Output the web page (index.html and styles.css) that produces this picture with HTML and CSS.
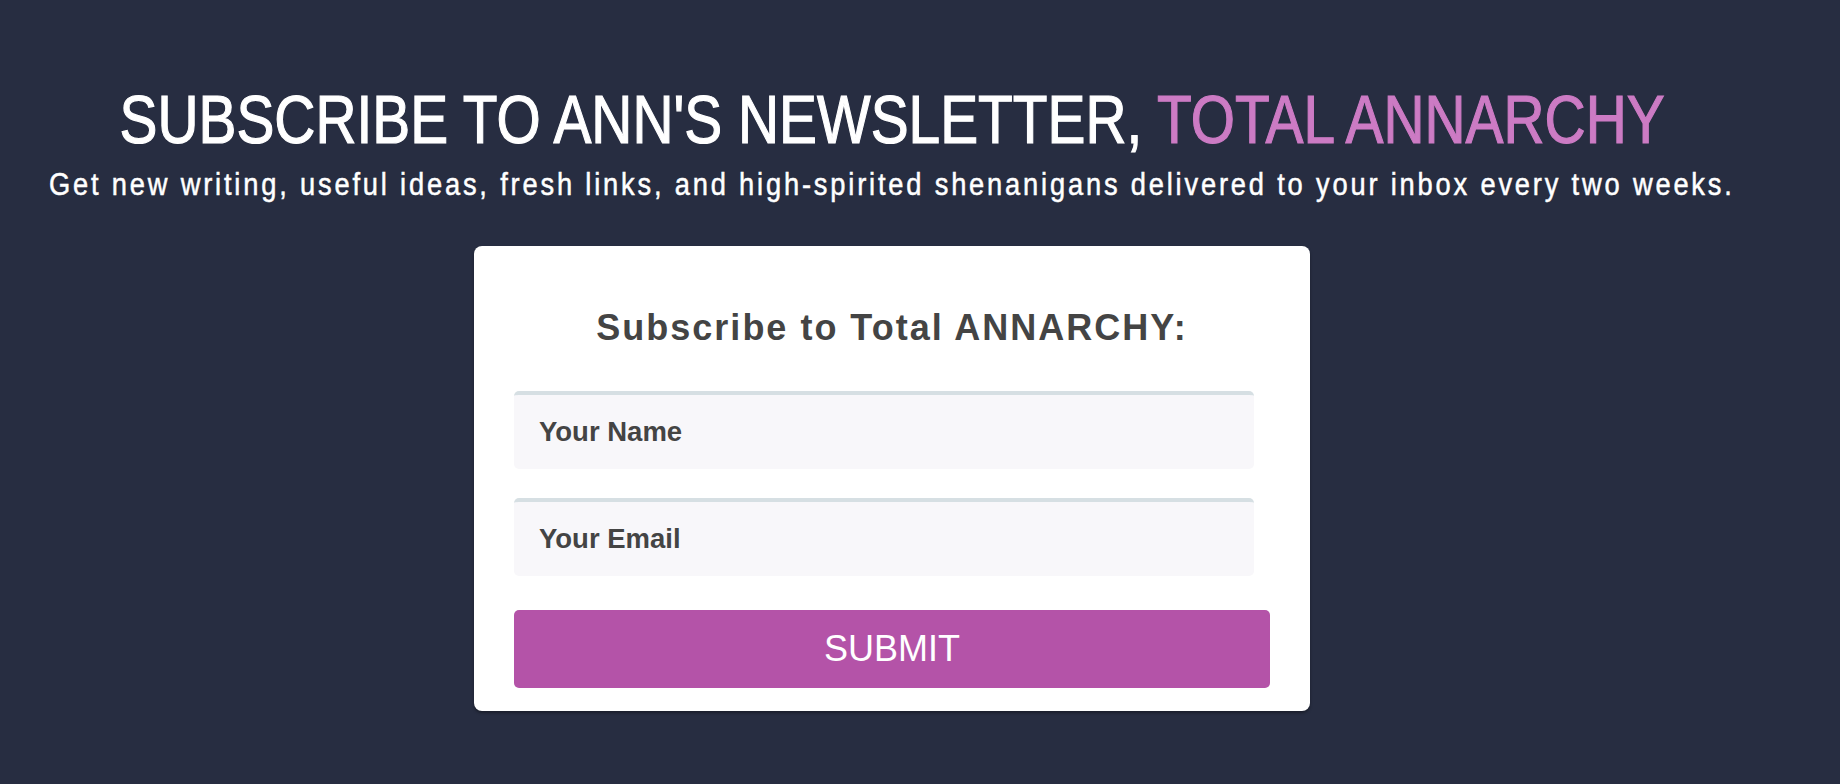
FILE: index.html
```html
<!DOCTYPE html>
<html lang="en">
<head>
<meta charset="utf-8">
<title>Subscribe to Total ANNARCHY</title>
<link rel="stylesheet" href="styles.css">
</head>
<body>
<main class="page">
  <h1 class="headline">SUBSCRIBE TO ANN'S NEWSLETTER, <span class="accent">TOTAL ANNARCHY</span></h1>
  <p class="subtitle">Get new writing, useful ideas, fresh links, and high-spirited shenanigans delivered to your inbox every two weeks.</p>
  <form class="card">
    <h2 class="card-title">Subscribe to Total ANNARCHY:</h2>
    <input class="field" type="text" placeholder="Your Name">
    <input class="field field-email" type="email" placeholder="Your Email">
    <button class="submit" type="button">SUBMIT</button>
  </form>
</main>
</body>
</html>
```

FILE: styles.css
```css
html, body {
  margin: 0;
  padding: 0;
  background: #272d41;
  height: 100%;
}

.page {
  box-sizing: border-box;
  width: 1784px;
  display: flex;
  flex-direction: column;
  align-items: center;
  padding-top: 85px;
}

.headline {
  margin: 0;
  font-family: "Liberation Sans", Arial, sans-serif;
  font-weight: 400;
  font-size: 68px;
  line-height: 68px;
  color: #ffffff;
  white-space: nowrap;
  -webkit-text-stroke: 1.2px currentColor;
  transform: scaleX(0.836);
}

.accent {
  color: #cc7bc4;
}

.subtitle {
  margin: 14px 0 0;
  font-family: "Liberation Sans", Arial, sans-serif;
  font-size: 31px;
  line-height: 36px;
  letter-spacing: 3.2px;
  color: #ffffff;
  white-space: nowrap;
  -webkit-text-stroke: 0.5px currentColor;
  transform: scaleX(0.88);
}

.card {
  box-sizing: border-box;
  width: 836px;
  margin-top: 43px;
  padding: 62px 40px 23px;
  background: #ffffff;
  border-radius: 8px;
  box-shadow: 0 2px 3px rgba(0, 0, 0, 0.35);
  display: flex;
  flex-direction: column;
}

.card-title {
  margin: 0 0 43px;
  text-align: center;
  font-family: "Liberation Sans", Arial, sans-serif;
  font-weight: 700;
  font-size: 36px;
  line-height: 40px;
  letter-spacing: 2px;
  color: #444444;
}

.field {
  box-sizing: border-box;
  width: calc(100% - 16px);
  height: 78px;
  margin: 0;
  padding: 0 25px;
  border: 0;
  border-top: 4px solid #d6dfe3;
  border-radius: 5px;
  background: #f8f7fa;
  font-family: "Liberation Sans", Arial, sans-serif;
  font-weight: 700;
  font-size: 27.5px;
  color: #444444;
  outline: none;
}

.field::placeholder {
  color: #444444;
  opacity: 1;
}

.field-email {
  margin-top: 29px;
}

.submit {
  box-sizing: border-box;
  width: 100%;
  height: 78px;
  margin-top: 34px;
  border: 0;
  border-radius: 5px;
  background: #b453a8;
  color: #ffffff;
  font-family: "Liberation Sans", Arial, sans-serif;
  font-size: 36px;
  font-weight: 400;
  cursor: pointer;
}
```
